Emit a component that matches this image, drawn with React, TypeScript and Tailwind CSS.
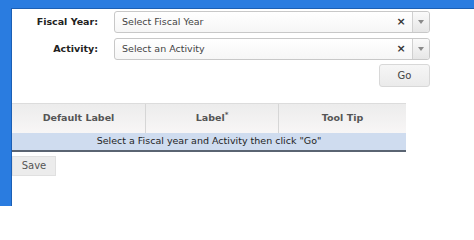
const font = 'font-["DejaVu_Sans",Verdana,sans-serif]';

const SelectBox = ({ placeholder }: { placeholder: string }) => (
  <div className="flex h-[22px] w-[316px] rounded-[3px] border border-[#c8c8c8] bg-gradient-to-b from-white to-[#f6f6f6]">
    <div className="flex flex-1 items-center pl-[7px] text-[9.5px] text-[#444]">{placeholder}</div>
    <div className="flex w-[22px] items-center justify-center text-[11px] font-bold text-[#333]">×</div>
    <div className="flex w-[17px] items-center justify-center rounded-r-[3px] border-l border-[#d0d0d0] bg-gradient-to-b from-[#fafafa] to-[#e6e6e6]">
      <svg width="6" height="4" viewBox="0 0 6 4">
        <path d="M0 0 L6 0 L3 4 Z" fill="#8a8a8a" />
      </svg>
    </div>
  </div>
);

const FormRow = ({ label, placeholder }: { label: string; placeholder: string }) => (
  <div className="flex items-center">
    <div className="w-[86px] text-right text-[9.5px] font-bold text-[#222]">{label}</div>
    <div className="ml-[16px]">
      <SelectBox placeholder={placeholder} />
    </div>
  </div>
);

export default function App() {
  return (
    <div className={`h-[225px] w-[474px] bg-white ${font}`}>
      <div className="h-[206px] bg-[#2a7ce0] pl-[11px] pt-[8px]">
        <div className="h-full border-l border-t border-[#1c5fb4] bg-white pt-[2px]">
          <FormRow label="Fiscal Year:" placeholder="Select Fiscal Year" />
          <div className="mt-[5px]">
            <FormRow label="Activity:" placeholder="Select an Activity" />
          </div>
          <div className="mt-[4px] flex w-[418px] justify-end">
            <button className="h-[23px] w-[51px] rounded-[3px] border border-[#d8d8d8] bg-gradient-to-b from-[#f6f6f6] to-[#ebebeb] text-[10px] text-[#444]">
              Go
            </button>
          </div>

          <div className="mt-[16px] w-[394px]">
            <div className="grid h-[30px] grid-cols-[134px_133px_127px] border-t border-[#dcdcdc] bg-gradient-to-b from-[#ececec] to-[#f8f6f6] text-[9.5px] font-bold text-[#555]">
              <div className="flex items-center justify-center border-r border-[#d6d6d6]">Default Label</div>
              <div className="flex items-center justify-center border-r border-[#d6d6d6]">
                Label<span className="-mt-[7px] text-[7px]">*</span>
              </div>
              <div className="flex items-center justify-center">Tool Tip</div>
            </div>
            <div className="flex h-[19px] items-center justify-center border-b-2 border-[#5a6472] bg-[#cfdcef] text-[9.5px] text-[#1e1e1e]">
              Select a Fiscal year and Activity then click "Go"
            </div>
          </div>

          <button className="mt-[1px] h-[20px] w-[44px] border border-[#e0e0e0] bg-[#ececec] text-[10px] text-[#555]">
            Save
          </button>
        </div>
      </div>
    </div>
  );
}
